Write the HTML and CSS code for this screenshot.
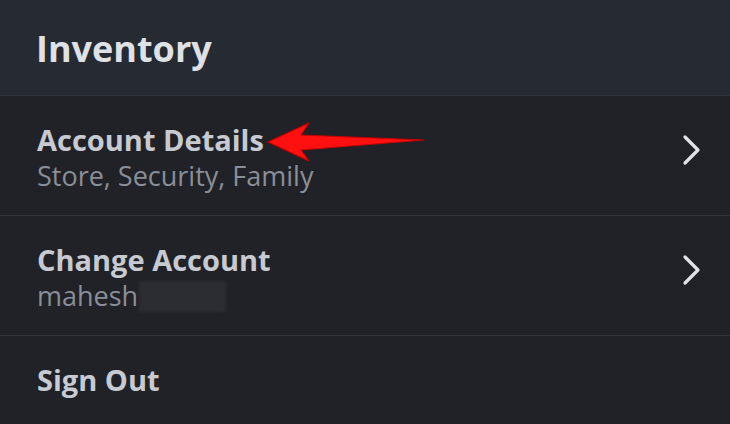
FILE: index.html
```html
<!DOCTYPE html>
<html>
<head>
<meta charset="utf-8">
<link rel="stylesheet" href="styles.css">
</head>
<body>
<div class="page">
  <header class="header"><h1 class="header-title">Inventory</h1></header>
  <div class="row">
    <div class="row-text">
      <div class="row-title">Account Details</div>
      <div class="row-sub">Store, Security, Family</div>
    </div>
    <svg class="chevron" width="20" height="32" viewBox="0 0 20 32"><path d="M3 3 L16 16 L3 29" fill="none" stroke="#e1e3e7" stroke-width="3.2" stroke-linecap="round" stroke-linejoin="round"/></svg>
  </div>
  <div class="row">
    <div class="row-text">
      <div class="row-title">Change Account</div>
      <div class="row-sub">mahesh<span class="blur"></span></div>
    </div>
    <svg class="chevron" width="20" height="32" viewBox="0 0 20 32"><path d="M3 3 L16 16 L3 29" fill="none" stroke="#e1e3e7" stroke-width="3.2" stroke-linecap="round" stroke-linejoin="round"/></svg>
  </div>
  <div class="row row-last">
    <div class="row-text">
      <div class="row-title">Sign Out</div>
    </div>
  </div>
  <svg class="annot" width="730" height="424" viewBox="0 0 730 424">
    <polygon points="268,142 309,123 301,135 424,140 301,150 309,161" fill="#ff1010" stroke="#c80000" stroke-width="1.2" stroke-linejoin="round"/>
  </svg>
</div>
</body>
</html>
```
FILE: styles.css
```css
html, body { margin: 0; padding: 0; }
body {
  background: #202227;
  font-family: "Open Sans", "Noto Sans", sans-serif;
  width: 730px;
  height: 424px;
  overflow: hidden;
}
.page { position: relative; width: 730px; height: 424px; overflow: hidden; }
.header {
  height: 96px;
  box-sizing: border-box;
  background: #262a33;
  border-bottom: 1px solid #30343d;
  padding: 29px 0 0 36px;
}
.header-title {
  margin: 0;
  font-size: 36px;
  font-weight: 700;
  color: #dfe1e5;
  line-height: 40px;
}
.row {
  height: 120px;
  box-sizing: border-box;
  border-bottom: 1px solid #31343a;
  display: flex;
  justify-content: space-between;
  align-items: flex-start;
  padding: 26px 28px 0 37px;
}
.row-last { border-bottom: none; }
.row-title {
  font-size: 29px;
  font-weight: 700;
  color: #c7cad1;
  line-height: 36px;
}
.row-sub {
  font-size: 27px;
  color: #8a8e97;
  line-height: 36px;
  display: flex;
  align-items: center;
}
.blur {
  display: inline-block;
  width: 87px;
  height: 31px;
  margin-left: 1px;
  background: #2b2d32;
  filter: blur(1.5px);
}
.chevron { display: block; margin-top: 12px; }
.annot { position: absolute; left: 0; top: 0; pointer-events: none; }
```
